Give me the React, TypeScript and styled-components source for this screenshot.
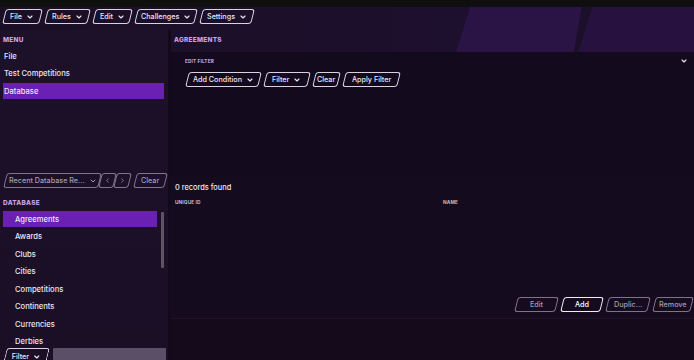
import React from "react";
import styled, {createGlobalStyle, css} from "styled-components";
import {ChevronDown, ChevronLeft, ChevronRight} from "lucide-react";

const GlobalStyle = createGlobalStyle`
  html, body {
    margin: 0;
    padding: 0;
    background: #140b1d;
  }
  body {
    font-family: "Inter", "Noto Sans", sans-serif;
    color: #ece6f2;
  }
  *, *::before, *::after {
    box-sizing: border-box;
  }
`;

const menuItems = ["File", "Test Competitions", "Database"];
const databaseItems = ["Agreements", "Awards", "Clubs", "Cities", "Competitions", "Continents", "Currencies", "Derbies"];

type SkewProps = {
    label: React.ReactNode,
    w: number,
    chevron?: boolean,
    dim?: boolean,
    bright?: boolean,
    open?: boolean
};

const SkewButton = ({label, w, chevron, dim, bright, open}: SkewProps) => (
    <Button $w={w} $dim={dim} $bright={bright} $open={open}>
        <ButtonInner>
            <span>{label}</span>
            {chevron && <ChevronDown size={8} strokeWidth={3.5}/>}
        </ButtonInner>
    </Button>
);

const App = () => {
    return (
        <>
            <GlobalStyle/>
            <Page>
                <TopStrip/>
                <Hero>
                    <svg width="694" height="45" viewBox="0 0 694 45">
                        <polygon points="470,0 582,0 574,45 456,45" fill="#2a1345"/>
                        <polygon points="592,0 694,0 694,45 578,45" fill="#27113f"/>
                        <polygon points="582,0 592,0 578,45 574,45" fill="#1b0f2a"/>
                    </svg>
                </Hero>
                <Toolbar>
                    <SkewButton label="File" w={37} chevron/>
                    <SkewButton label="Rules" w={43} chevron/>
                    <SkewButton label="Edit" w={37} chevron/>
                    <SkewButton label="Challenges" w={60} chevron/>
                    <SkewButton label="Settings" w={52} chevron/>
                </Toolbar>
                <Columns>
                    <Sidebar>
                        <SectionTitle $top={6}>MENU</SectionTitle>
                        <MenuList>
                            {menuItems.map(item => (
                                <MenuItem key={item} $selected={item === "Database"}>{item}</MenuItem>
                            ))}
                        </MenuList>
                        <Spacer/>
                        <RecentRow>
                            <Button $w={95} $dim>
                                <ButtonInner>
                                    <span>Recent Database Re...</span>
                                    <ChevronDown size={8} strokeWidth={3}/>
                                </ButtonInner>
                            </Button>
                            <Button $w={15} $dim $pad={0}>
                                <ButtonInner><ChevronLeft size={7} strokeWidth={2.5}/></ButtonInner>
                            </Button>
                            <Button $w={15} $dim $pad={0}>
                                <ButtonInner><ChevronRight size={7} strokeWidth={2.5}/></ButtonInner>
                            </Button>
                            <Gap/>
                            <SkewButton label="Clear" w={31} dim/>
                        </RecentRow>
                        <SectionTitle $top={10}>DATABASE</SectionTitle>
                        <DbListWrap>
                            <DbList>
                                {databaseItems.map(item => (
                                    <DbItem key={item} $selected={item === "Agreements"}>{item}</DbItem>
                                ))}
                            </DbList>
                            <ScrollTrack>
                                <ScrollThumb/>
                            </ScrollTrack>
                        </DbListWrap>
                        <FilterRow>
                            <SkewButton label="Filter" w={43} chevron open/>
                            <FilterInput/>
                        </FilterRow>
                    </Sidebar>
                    <Divider/>
                    <Main>
                        <MainTitle>AGREEMENTS</MainTitle>
                        <FilterPanel>
                            <FilterHeader>
                                <SmallTitle>EDIT FILTER</SmallTitle>
                                <ChevronDown size={8} strokeWidth={3.5} color="#e8e2ee"/>
                            </FilterHeader>
                            <ButtonRow>
                                <SkewButton label="Add Condition" w={73} chevron/>
                                <SkewButton label="Filter" w={44} chevron/>
                                <SkewButton label="Clear" w={25}/>
                                <SkewButton label="Apply Filter" w={55}/>
                            </ButtonRow>
                        </FilterPanel>
                        <Records>
                            <RecordCount>0 records found</RecordCount>
                            <TableHead>
                                <HeadCell>UNIQUE ID</HeadCell>
                                <HeadCell>NAME</HeadCell>
                            </TableHead>
                            <TableBody/>
                            <ActionBar>
                                <SkewButton label="Edit" w={41} dim/>
                                <SkewButton label="Add" w={40} bright/>
                                <SkewButton label="Duplic..." w={42} dim/>
                                <SkewButton label="Remove" w={38} dim/>
                            </ActionBar>
                            <Footer/>
                        </Records>
                    </Main>
                </Columns>
            </Page>
        </>
    );
};

export default App;

const Page = styled.div`
  position: relative;
  width: 694px;
  height: 360px;
  overflow: hidden;
  display: flex;
  flex-direction: column;
  background: #140b1d;
`;

const TopStrip = styled.div`
  height: 7px;
  background: #0f0f10;
  position: relative;
  z-index: 1;
`;

const Hero = styled.div`
  position: absolute;
  top: 7px;
  left: 0;
  width: 694px;
  height: 45px;
  background: linear-gradient(90deg, #1a1026 0%, #1d0f2d 60%, #220f35 100%);

  svg {
    display: block;
  }
`;

const Toolbar = styled.div`
  position: relative;
  height: 23px;
  display: flex;
  align-items: flex-start;
  gap: 5px;
  padding: 2px 0 0 4px;
  background: linear-gradient(90deg, #1a1026 0%, rgba(26, 16, 38, 0) 45%);
`;

const Button = styled.div<{$w: number, $dim?: boolean, $bright?: boolean, $open?: boolean, $pad?: number}>`
  width: ${({$w}) => $w}px;
  height: 15px;
  padding: 0 ${({$pad}) => $pad ?? 4}px;
  border: 1.3px solid #d9d2e0;
  border-radius: 3px;
  transform: skewX(-14deg);
  display: flex;
  align-items: center;
  justify-content: center;
  flex-shrink: 0;
  color: #ece6f2;

  ${({$dim}) => $dim && css`
    border-color: #7f748c;
    color: #a59cb0;
  `}

  ${({$bright}) => $bright && css`
    border-color: #f2eef6;
    color: #ffffff;
  `}

  ${({$open}) => $open && css`
    border-bottom: none;
    border-radius: 3px 3px 0 0;
  `}
`;

const ButtonInner = styled.div`
  transform: skewX(14deg);
  display: flex;
  align-items: center;
  gap: 4px;
  font-size: 7.2px;
  font-weight: 500;
  white-space: nowrap;
  color: inherit;
`;

const Columns = styled.div`
  position: relative;
  flex: 1;
  display: flex;
  min-height: 0;
`;

const Sidebar = styled.div`
  width: 168px;
  display: flex;
  flex-direction: column;
  background: linear-gradient(180deg, #1d1029 0%, #1b0f26 100%);
`;

const Divider = styled.div`
  width: 3px;
  background: #120a1a;
`;

const SectionTitle = styled.div<{$top: number}>`
  font-size: 6.4px;
  line-height: 8px;
  font-weight: 800;
  letter-spacing: 0.3px;
  color: #c9a3ef;
  padding: ${({$top}) => $top}px 0 0 3px;
  height: ${({$top}) => $top + 8}px;
  flex-shrink: 0;
`;

const MenuList = styled.div`
  display: flex;
  flex-direction: column;
  padding: 0 4px 0 3px;
  margin-top: 4px;
  flex-shrink: 0;
`;

const MenuItem = styled.div<{$selected?: boolean}>`
  height: 16px;
  margin-bottom: 1.5px;
  display: flex;
  align-items: center;
  padding-left: 1px;
  font-size: 7.6px;
  font-weight: 500;
  color: #ece6f2;

  ${({$selected}) => $selected && css`
    background: #6a21b3;
  `}
`;

const Spacer = styled.div`
  flex: 1;
  min-height: 0;
`;

const RecentRow = styled.div`
  display: flex;
  align-items: center;
  padding-left: 5px;
  height: 17px;
  flex-shrink: 0;
`;

const Gap = styled.div`
  width: 5px;
`;

const DbListWrap = styled.div`
  height: 137px;
  flex-shrink: 0;
  display: flex;
  padding-left: 3px;
  margin-top: 4px;
  overflow: hidden;
`;

const DbList = styled.div`
  width: 154px;
  display: flex;
  flex-direction: column;
`;

const DbItem = styled.div<{$selected?: boolean}>`
  height: 16px;
  flex-shrink: 0;
  margin-bottom: 1.5px;
  display: flex;
  align-items: center;
  padding-left: 12px;
  font-size: 7.6px;
  font-weight: 500;
  color: #ece6f2;

  ${({$selected}) => $selected && css`
    background: #6a21b3;
  `}
`;

const ScrollTrack = styled.div`
  width: 3px;
  margin-left: 4px;
  padding-top: 1px;
`;

const ScrollThumb = styled.div`
  height: 56px;
  background: #5d5566;
  border-radius: 1px;
`;

const FilterRow = styled.div`
  display: flex;
  align-items: flex-start;
  gap: 5px;
  padding-left: 5px;
  height: 12px;
  flex-shrink: 0;
`;

const FilterInput = styled.div`
  width: 113px;
  height: 14px;
  background: #5a4f67;
  border-radius: 1px;
`;

const Main = styled.div`
  flex: 1;
  display: flex;
  flex-direction: column;
`;

const MainTitle = styled.div`
  font-size: 6.4px;
  line-height: 8px;
  font-weight: 800;
  letter-spacing: 0.3px;
  color: #c9a3ef;
  padding: 6px 0 0 3px;
  height: 22px;
`;

const FilterPanel = styled.div`
  height: 125px;
  background: #140a1d;
  display: flex;
  flex-direction: column;
  padding: 5px 6px 0 14px;
`;

const FilterHeader = styled.div`
  display: flex;
  align-items: center;
  justify-content: space-between;
  height: 8px;
`;

const SmallTitle = styled.div`
  font-size: 4.6px;
  font-weight: 800;
  color: #b79ed6;
  letter-spacing: 0.2px;
`;

const ButtonRow = styled.div`
  display: flex;
  gap: 5px;
  margin-top: 7px;
  padding-left: 2px;
`;

const Records = styled.div`
  flex: 1;
  display: flex;
  flex-direction: column;
  background: #150b1f;
`;

const RecordCount = styled.div`
  font-size: 7.4px;
  line-height: 9px;
  font-weight: 500;
  color: #ece6f2;
  padding: 6px 0 0 4px;
  height: 15px;
`;

const TableHead = styled.div`
  display: grid;
  grid-template-columns: 268px 1fr;
  padding: 7px 0 0 4px;
  height: 13px;
  line-height: 6px;
`;

const HeadCell = styled.div`
  font-size: 4.8px;
  font-weight: 700;
  color: #c2bacb;
  letter-spacing: 0.1px;
`;

const TableBody = styled.div`
  flex: 1;
`;

const ActionBar = styled.div`
  display: flex;
  justify-content: flex-end;
  gap: 5px;
  padding: 3px 2px 0 0;
  height: 25px;
  border-bottom: 1px solid #1e1428;
`;

const Footer = styled.div`
  height: 41px;
  background: #140a1c;
`;
